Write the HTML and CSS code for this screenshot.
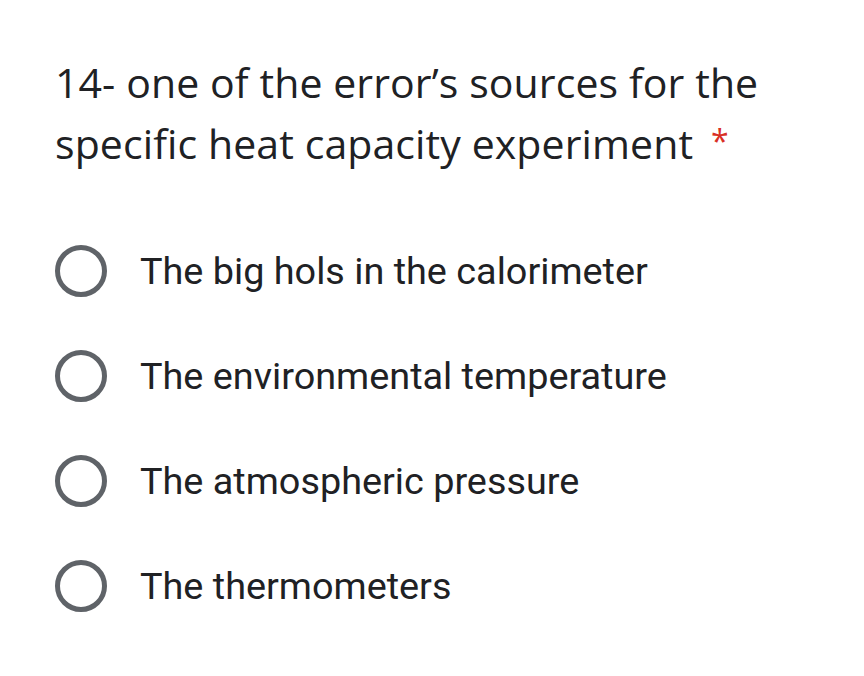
FILE: index.html
```html
<!DOCTYPE html>
<html>
<head>
<meta charset="utf-8">
<link rel="stylesheet" href="styles.css">
</head>
<body>
<div class="question">
  <div class="title">14- one of the error’s sources for the specific heat capacity experiment<span class="req">*</span></div>
  <div class="options">
    <div class="option"><span class="radio"></span><span class="label">The big hols in the calorimeter</span></div>
    <div class="option"><span class="radio"></span><span class="label">The environmental temperature</span></div>
    <div class="option"><span class="radio"></span><span class="label">The atmospheric pressure</span></div>
    <div class="option"><span class="radio"></span><span class="label">The thermometers</span></div>
  </div>
</div>
</body>
</html>
```
FILE: styles.css
```css
html, body {
  margin: 0;
  background: #ffffff;
}
.question {
  padding: 52px 0 0 55px;
  width: 760px;
}
.title {
  font-family: "Open Sans", sans-serif;
  font-size: 41px;
  line-height: 61px;
  color: #202124;
  letter-spacing: 0.1px;
}
.req {
  color: #d93025;
  margin-left: 18px;
  font-size: 32px;
  vertical-align: 6px;
  line-height: 1;
}
.options {
  display: flex;
  flex-direction: column;
  gap: 53px;
  margin-top: 71px;
}
.option {
  display: flex;
  align-items: center;
  height: 52px;
}
.radio {
  width: 52px;
  height: 52px;
  box-sizing: border-box;
  border: 5px solid #5f6368;
  border-radius: 50%;
  flex: none;
}
.label {
  margin-left: 33px;
  font-family: Roboto, sans-serif;
  font-size: 37.8px;
  color: #202124;
}
```
